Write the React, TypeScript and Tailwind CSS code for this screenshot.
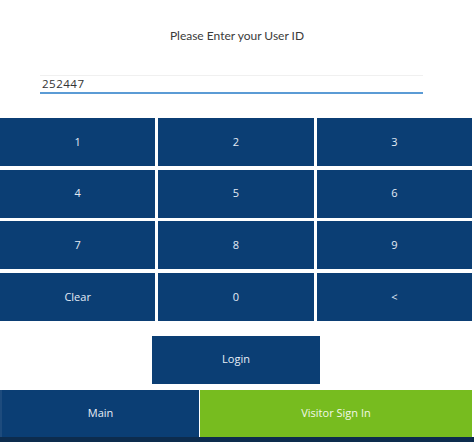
import React from "react";

const keys = ["1", "2", "3", "4", "5", "6", "7", "8", "9", "Clear", "0", "<"];

export default function App() {
  return (
    <div className="w-[474px] h-[442px] bg-white flex flex-col overflow-hidden" style={{ fontFamily: '"Open Sans", "Liberation Sans", sans-serif' }}>
      <div className="pt-[29px] text-center text-[12px] leading-[14px] text-[#3a3a3a]" style={{ fontFamily: 'Lato, "Open Sans", sans-serif' }}>
        Please Enter your User ID
      </div>
      <div className="mt-[32px] ml-[40px] w-[383px] h-[19px] border-t border-[#f0f0f0] border-b-2 border-b-[#5b9bd5] flex items-center px-[2px] text-[11.5px] text-[#333] tracking-[0.5px]">
        252447
      </div>
      <div className="mt-[24px] w-[472px] grid grid-cols-3 gap-x-[3px] gap-y-[3.67px] auto-rows-[48px]">
        {keys.map((k) => (
          <div key={k} className="bg-[#0b3e74] flex items-center justify-center text-[11px] text-[#e3ecf6]">
            {k}
          </div>
        ))}
      </div>
      <div className="mt-[15px] ml-[152px] w-[168px] h-[48px] bg-[#0b3e74] flex items-center justify-center text-[11px] text-[#e8eff7]">
        Login
      </div>
      <div className="mt-[6px] flex h-[48px]">
        <div className="w-[199px] bg-[#0b3e74] border-l-2 border-l-[#1d4b7d] flex items-center justify-center text-[11px] text-[#e8eff7]">
          Main
        </div>
        <div className="w-[1px] bg-white" />
        <div className="w-[272px] bg-[#77bc1f] flex items-center justify-center text-[11px] text-[#f2f8e8]">
          Visitor Sign In
        </div>
      </div>
      <div className="h-[5px] bg-[#0d2c4e]" />
    </div>
  );
}
